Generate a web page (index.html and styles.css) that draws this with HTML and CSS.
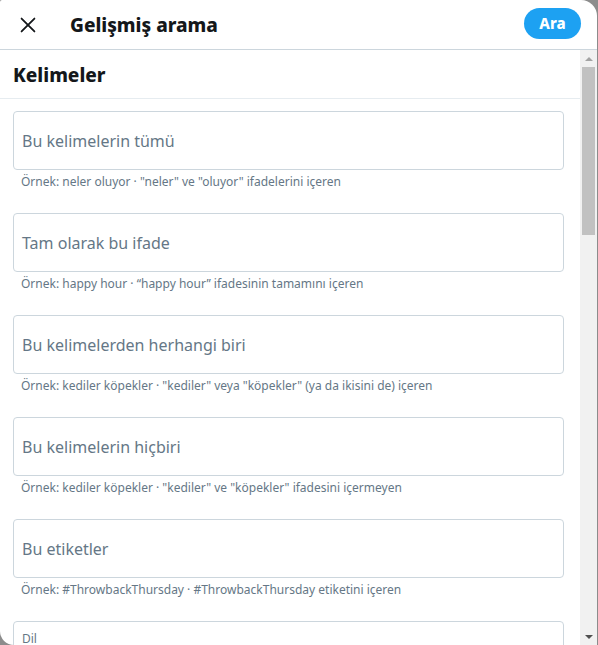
FILE: index.html
```html
<!DOCTYPE html>
<html lang="tr">
<head>
<meta charset="utf-8">
<link rel="stylesheet" href="styles.css">
</head>
<body>
<div class="modal">
  <header class="header">
    <button class="close" aria-label="Kapat">
      <svg viewBox="0 0 24 24" width="22" height="22"><path d="M5 5 L19 19 M19 5 L5 19" stroke="#14171a" stroke-width="2" stroke-linecap="round" fill="none"/></svg>
    </button>
    <h1 class="title">Gelişmiş arama</h1>
    <button class="search-btn">Ara</button>
  </header>
  <div class="main">
    <div class="content">
      <h2 class="section-title">Kelimeler</h2>
      <div class="fields">
        <div class="field">
          <div class="input"><span class="placeholder">Bu kelimelerin tümü</span></div>
          <p class="hint">Örnek: neler oluyor · "neler" ve "oluyor" ifadelerini içeren</p>
        </div>
        <div class="field">
          <div class="input"><span class="placeholder">Tam olarak bu ifade</span></div>
          <p class="hint">Örnek: happy hour · “happy hour” ifadesinin tamamını içeren</p>
        </div>
        <div class="field">
          <div class="input"><span class="placeholder">Bu kelimelerden herhangi biri</span></div>
          <p class="hint">Örnek: kediler köpekler · "kediler" veya "köpekler" (ya da ikisini de) içeren</p>
        </div>
        <div class="field">
          <div class="input"><span class="placeholder">Bu kelimelerin hiçbiri</span></div>
          <p class="hint">Örnek: kediler köpekler · "kediler" ve "köpekler" ifadesini içermeyen</p>
        </div>
        <div class="field">
          <div class="input"><span class="placeholder">Bu etiketler</span></div>
          <p class="hint">Örnek: #ThrowbackThursday · #ThrowbackThursday etiketini içeren</p>
        </div>
        <div class="field">
          <div class="input select"><span class="label">Dil</span></div>
        </div>
      </div>
    </div>
    <div class="scrollbar">
      <div class="arrow up"></div>
      <div class="track"><div class="thumb"></div></div>
      <div class="arrow down"></div>
    </div>
  </div>
</div>
</body>
</html>
```

FILE: styles.css
```css
* { box-sizing: border-box; }
html, body { margin: 0; padding: 0; }
body {
  background: #8c8c8c;
  width: 598px;
  height: 645px;
  overflow: hidden;
  font-family: "Noto Sans", "Open Sans", sans-serif;
}
.modal {
  width: 597px;
  height: 645px;
  background: #fff;
  border-radius: 2px 16px 0 14px;
  overflow: hidden;
  display: flex;
  flex-direction: column;
}
.header {
  height: 50px;
  flex: none;
  display: flex;
  align-items: center;
  border-bottom: 1px solid #ccd6dd;
  padding: 0 16px 0 16px;
}
.close {
  border: 0;
  background: none;
  padding: 0;
  width: 24px;
  height: 24px;
  display: flex;
  align-items: center;
  justify-content: center;
  margin-left: 0;
}
.title {
  margin: 0 0 0 30px;
  font-size: 19px;
  font-weight: 800;
  color: #14171a;
  flex: 1;
  line-height: 24px;
}
.search-btn {
  border: 0;
  background: #1da1f2;
  color: #fff;
  font-family: inherit;
  font-weight: 800;
  font-size: 15px;
  height: 31px;
  width: 57px;
  border-radius: 16px;
  margin-top: -3px;
}
.main {
  flex: 1;
  display: flex;
  min-height: 0;
}
.content {
  flex: 1;
  overflow: hidden;
}
.section-title {
  margin: 0;
  height: 49px;
  padding: 2px 13px 0;
  display: flex;
  align-items: center;
  font-size: 19px;
  font-weight: 800;
  color: #14171a;
  border-bottom: 1px solid #e6ecf0;
}
.fields {
  padding: 12px 16px 0 13px;
}
.field {
  margin-bottom: 23px;
}
.input {
  height: 59px;
  border: 1px solid #ccd6dd;
  border-radius: 4px;
  display: flex;
  align-items: center;
  padding: 0 8px;
}
.placeholder {
  font-size: 16px;
  color: #657786;
}
.select {
  align-items: flex-start;
  padding-top: 8px;
}
.label {
  font-size: 12px;
  color: #657786;
}
.hint {
  margin: 4px 0 0 0;
  padding-left: 8px;
  font-size: 12px;
  line-height: 16px;
  color: #657786;
}
.scrollbar {
  width: 17px;
  flex: none;
  background: #f1f1f1;
  display: flex;
  flex-direction: column;
}
.arrow {
  height: 17px;
  flex: none;
  display: flex;
  align-items: center;
  justify-content: center;
}
.arrow::before {
  content: "";
  width: 0;
  height: 0;
  border-left: 4px solid transparent;
  border-right: 4px solid transparent;
}
.up::before { border-bottom: 4px solid #a3a3a3; }
.down::before { border-top: 4px solid #505050; }
.track {
  flex: 1;
  padding: 0 2px;
}
.thumb {
  height: 168px;
  background: #c1c1c1;
}
```
